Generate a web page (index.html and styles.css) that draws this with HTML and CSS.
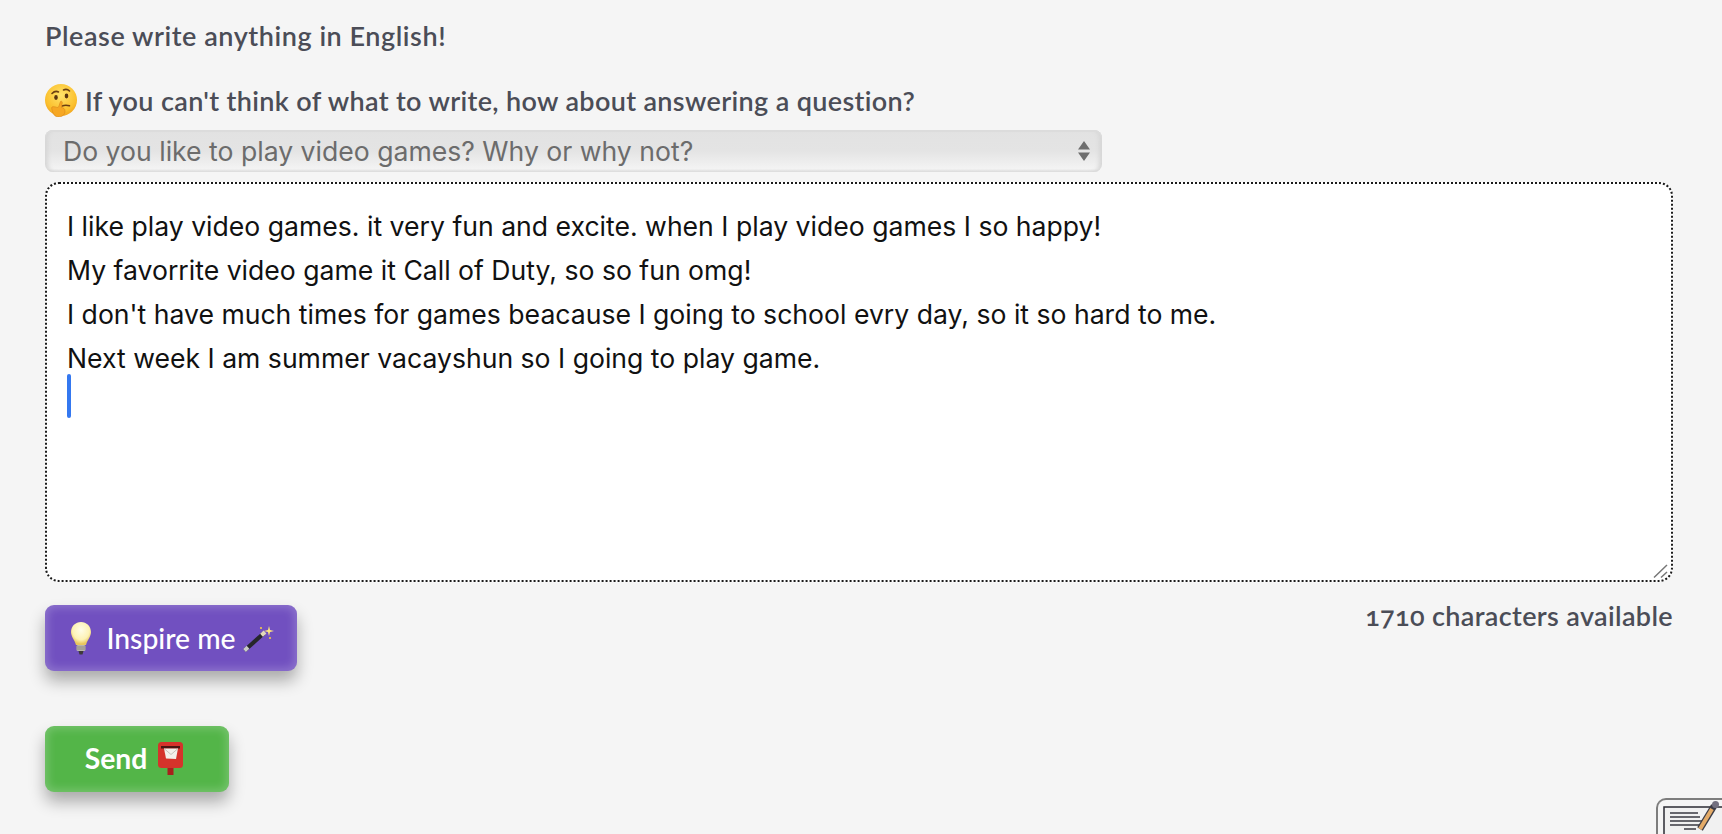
FILE: index.html
```html
<!DOCTYPE html>
<html lang="en">
<head>
<meta charset="utf-8">
<title>Write in English</title>
<link rel="stylesheet" href="styles.css">
</head>
<body>
<main class="page">
  <p class="lead">Please write anything in English!</p>
  <label class="prompt">
    <svg class="emoji-think" viewBox="0 0 32 33" aria-hidden="true">
      <defs><radialGradient id="face" cx="50%" cy="35%" r="70%"><stop offset="0" stop-color="#ffe36a"/><stop offset=".7" stop-color="#fbc02d"/><stop offset="1" stop-color="#ee9c1c"/></radialGradient></defs>
      <circle cx="16" cy="16" r="16" fill="url(#face)"/>
      <path d="M7 9.500c2-2 4.500-2.500 6.500-1.500M18.500 6c2-1 4.500-.5 6 1" fill="none" stroke="#6b3f12" stroke-width="1.600" stroke-linecap="round"/>
      <ellipse cx="11" cy="13.500" rx="1.800" ry="2.400" fill="#5a3510"/>
      <ellipse cx="21.500" cy="12" rx="1.800" ry="2.400" fill="#5a3510"/>
      <path d="M17 22c2.500-1 5-1 7.500-.2" fill="none" stroke="#6b3f12" stroke-width="1.600" stroke-linecap="round"/>
      <path d="M7 23c2-1 4 .5 6 .5 1 0 1.500-4 2.500-6 1-.8 2 .2 1.700 1.500l-.7 4.500c2 .2 3.500 1.500 3.500 3.500 0 3-2.500 6-6.500 6-3.500 0-5.500-3-6-5.500-.2-1.300-1.500-3.700-.5-4.500z" fill="#f6a723" stroke="#d9851a" stroke-width=".6"/>
    </svg>
    If you can't think of what to write, how about answering a question?
  </label>
  <div class="select">
    <span>Do you like to play video games? Why or why not?</span>
    <svg class="select-arrows" viewBox="0 0 12 20" aria-hidden="true"><path d="M6 0l6 8.500H0zM6 20L0 11.500h12z" fill="#6e6e6e"/></svg>
  </div>
  <div class="editor">
    <div>I like play video games. it very fun and excite. when I play video games I so happy!</div>
    <div>My favorrite video game it Call of Duty, so so fun omg!</div>
    <div>I don't have much times for games beacause I going to school evry day, so it so hard to me.</div>
    <div>Next week I am summer vacayshun so I going to play game.</div>
    <div class="caret-line"><span class="caret"></span></div>
    <svg class="grip" viewBox="0 0 16 16" aria-hidden="true"><path d="M1 14.500L14 2M8 14.500l6-5.500" stroke="#777" stroke-width="1.500" fill="none"/></svg>
  </div>
  <div class="tools">
    <button class="btn btn-purple" type="button">
      <svg class="emoji-bulb" viewBox="0 0 20 33" aria-hidden="true">
        <defs><radialGradient id="bulb" cx="50%" cy="35%" r="60%"><stop offset="0" stop-color="#fffde8"/><stop offset=".7" stop-color="#fdf2b4"/><stop offset="1" stop-color="#e8c65e"/></radialGradient></defs>
        <path d="M10 0C4.500 0 0 4.200 0 10c0 4.800 3.800 8 5 13h10c1.200-5 5-8.200 5-13C20 4.200 15.500 0 10 0z" fill="url(#bulb)"/>
        <rect x="5.500" y="23" width="9" height="6" rx="1.500" fill="#b9b5ad"/>
        <path d="M5.500 25h9M5.500 27h9" stroke="#85817a" stroke-width=".8"/>
        <path d="M7.500 29h5l-1 3.500h-3z" fill="#3e3a38"/>
      </svg>
      <span class="btn-label">Inspire me</span>
      <svg class="emoji-wand" viewBox="0 0 31 27" aria-hidden="true">
        <path d="M1.500 25.500L20.500 8.500" stroke="#26262a" stroke-width="4"/>
        <path d="M1.500 25.500l3.500-3.200" stroke="#c9c9c9" stroke-width="4"/>
        <path d="M18.500 10.300L22 7" stroke="#e3d9b8" stroke-width="4"/>
        <path d="M26 1l1 4 4 1-4 1-1 4-1-4-4-1 4-1z" fill="#ffe680"/>
        <circle cx="18" cy="3" r="1.100" fill="#f2c84b"/>
        <circle cx="27" cy="13" r="1.100" fill="#f2c84b"/>
      </svg>
    </button>
    <span class="count">1710 characters available</span>
  </div>
  <button class="btn btn-green" type="button">
    <span>Send</span>
    <svg class="emoji-post" viewBox="0 0 25 33" aria-hidden="true">
      <rect x="9.500" y="24" width="6" height="9" fill="#a8201c"/>
      <rect x="0" y="0" width="25" height="26" rx="3.500" fill="#d5332b"/>
      <rect x="3" y="4" width="19" height="2.500" fill="#4a1512"/>
      <path d="M6 6.500h14l-2 10.500-10-.5z" fill="#f3f0ea"/>
      <path d="M6 6.500l7 6 7-6" fill="none" stroke="#bdb8ae" stroke-width=".8"/>
    </svg>
  </button>
</main>
<aside class="notes-tab">
  <svg viewBox="0 0 66 36" aria-hidden="true">
    <rect x="6" y="7" width="62" height="40" fill="#f1f1f1" stroke="#2b2b33" stroke-width="1.500"/>
    <path d="M12 13h28M12 17h30M12 21h32M12 25h30M26 29h12" stroke="#3a3a42" stroke-width="1.500"/>
    <path d="M42 29L56 6" stroke="#3c3c46" stroke-width="6.500"/>
    <path d="M42 29L54 9" stroke="#e4ab68" stroke-width="4"/>
    <circle cx="57.500" cy="4.500" r="3.500" fill="#73707f"/>
  </svg>
</aside>
</body>
</html>
```
FILE: styles.css
```css
* { box-sizing: border-box; }
html, body { margin: 0; height: 100%; overflow: hidden; background: #f5f5f5; }
.page {
  padding: 0 49px 0 45px;
  font-family: "Lato", "Open Sans", sans-serif;
  color: #4b4d57;
}
.lead {
  margin: 0;
  padding-top: 20px;
  font-size: 27px;
  line-height: 32px;
  font-weight: 600;
  letter-spacing: .55px;
}
.prompt {
  display: flex;
  align-items: center;
  gap: 8px;
  margin-top: 32px;
  height: 32px;
  font-size: 27px;
  font-weight: 600;
  letter-spacing: .35px;
}
.emoji-think { width: 32px; height: 33px; flex: none; }
.select {
  display: flex;
  align-items: center;
  justify-content: space-between;
  width: 1057px;
  height: 42px;
  margin-top: 14px;
  padding: 0 12px 0 18px;
  border-radius: 8px;
  background: linear-gradient(#e2e2e2 0%, #e4e4e4 50%, #f3f3f3 92%, #dddddd 100%);
  box-shadow: inset 0 2px 1px #dcdcdc, inset 5px 0 4px -2px #d6d6d6, inset -5px 0 4px -2px #d6d6d6;
  font-family: "Inter", "Liberation Sans", sans-serif;
  font-size: 26.600px;
  color: #6c6c6c;
}
.select-arrows { width: 12px; height: 24px; }
.editor {
  position: relative;
  height: 400px;
  margin-top: 10px;
  padding: 20px 20px;
  background: #fff;
  border: 2px dotted #1b1b1b;
  border-radius: 14px;
  font-family: "Inter", "Liberation Sans", sans-serif;
  font-size: 26.600px;
  line-height: 44px;
  color: #111;
}
.caret-line { display: flex; height: 44px; margin-top: -6px; }
.caret { width: 4px; height: 44px; background: #3478f0; border-radius: 2px; }
.grip { position: absolute; right: 2px; bottom: 1px; width: 16px; height: 16px; }
.tools {
  display: flex;
  align-items: flex-start;
  justify-content: space-between;
  margin-top: 23px;
}
.count {
  font-size: 27px;
  font-weight: 600;
  line-height: 22px;
  letter-spacing: .35px;
  font-variant-numeric: oldstyle-nums;
}
.btn {
  display: flex;
  align-items: center;
  justify-content: center;
  height: 66px;
  padding: 0;
  border: 0;
  border-radius: 9px;
  font-family: "Lato", "Open Sans", sans-serif;
  font-size: 28.300px;
  color: #fff;
}
.btn-purple {
  width: 252px;
  padding-left: 3px;
  font-weight: 500;
  background: #7150c0;
  box-shadow: inset 0 0 9px 3px rgba(255, 255, 255, .2), 0 10px 16px rgba(0, 0, 0, .3);
}
.btn-label { margin: 0 7px 0 15px; }
.btn-green {
  width: 184px;
  margin-top: 55px;
  padding: 0 6px 2px 0;
  gap: 11px;
  font-weight: 700;
  background: #53b548;
  box-shadow: inset 0 0 9px 3px rgba(255, 255, 255, .2), 0 10px 16px rgba(0, 0, 0, .3);
}
.emoji-bulb { width: 20px; height: 33px; flex: none; }
.emoji-wand { width: 31px; height: 27px; flex: none; }
.emoji-post { width: 25px; height: 33px; flex: none; }
.notes-tab {
  position: fixed;
  right: 0;
  bottom: 0;
  width: 66px;
  height: 36px;
  background: #f5f5f5;
  border: 2px solid #7d7d7d;
  border-right: 0;
  border-bottom: 0;
  border-radius: 10px 0 0 0;
  overflow: hidden;
}
.notes-tab svg { display: block; width: 66px; height: 36px; }
```
